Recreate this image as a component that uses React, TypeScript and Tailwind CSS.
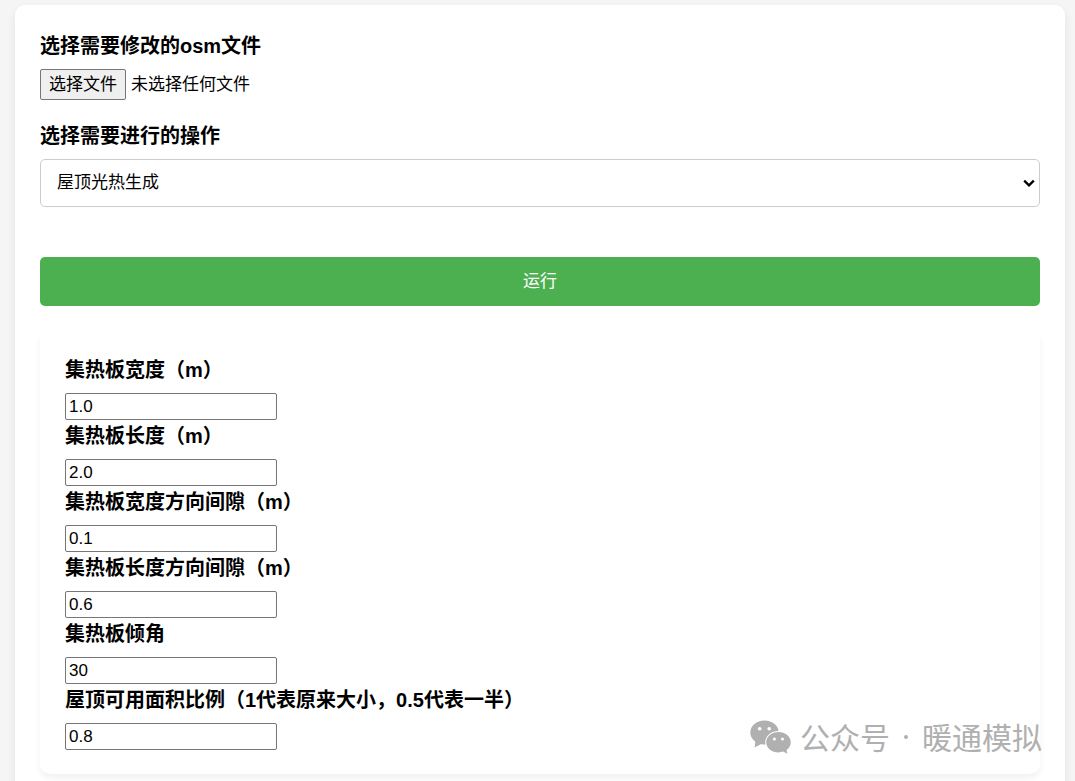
import { useRef, useState } from 'react';

interface ParamField {
  id: string;
  label: string;
  defaultValue: string;
}

const operations = [
  { value: 'roof-solar-thermal', label: '屋顶光热生成' },
];

const paramFields: ParamField[] = [
  { id: 'panel-width', label: '集热板宽度（m）', defaultValue: '1.0' },
  { id: 'panel-length', label: '集热板长度（m）', defaultValue: '2.0' },
  { id: 'width-gap', label: '集热板宽度方向间隙（m）', defaultValue: '0.1' },
  { id: 'length-gap', label: '集热板长度方向间隙（m）', defaultValue: '0.6' },
  { id: 'tilt', label: '集热板倾角', defaultValue: '30' },
  { id: 'roof-ratio', label: '屋顶可用面积比例（1代表原来大小，0.5代表一半）', defaultValue: '0.8' },
];

function WechatIcon() {
  return (
    <svg viewBox="0 0 42 34" className="h-[34px] w-[42px]" aria-hidden="true">
      <g fill="#b0b0b0">
        <ellipse cx="14.5" cy="12.5" rx="14.2" ry="12" />
        <path d="M5.5 20.5 4.6 27.6 12 23.5Z" />
      </g>
      <path
        d="M28.5 12C21.7 12 16.2 16.6 16.2 22.2S21.7 32.4 28.5 32.4C30.1 32.4 31.7 32.1 33.1 31.6L37.4 33.8 36.5 29.9C39.2 28 40.8 25.3 40.8 22.2 40.8 16.6 35.3 12 28.5 12Z"
        fill="#b0b0b0"
        stroke="#ffffff"
        strokeWidth="2"
        strokeLinejoin="round"
        paintOrder="stroke"
      />
      <g fill="#ffffff">
        <circle cx="9.7" cy="8.8" r="1.8" />
        <circle cx="19.2" cy="8.8" r="1.8" />
        <circle cx="24.4" cy="19" r="1.5" />
        <circle cx="32.5" cy="19" r="1.5" />
      </g>
    </svg>
  );
}

function FilePicker() {
  const inputRef = useRef<HTMLInputElement>(null);
  const [fileName, setFileName] = useState('');

  return (
    <div className="mb-[21px]">
      <label htmlFor="osm-file" className="mb-2 block text-xl leading-[30px] font-bold">
        选择需要修改的osm文件
      </label>
      <div className="flex items-center gap-[5px]">
        <input
          ref={inputRef}
          id="osm-file"
          type="file"
          accept=".osm"
          className="hidden"
          onChange={(e) => setFileName(e.target.files?.[0]?.name ?? '')}
        />
        <button
          type="button"
          onClick={() => inputRef.current?.click()}
          className="h-[31px] rounded-[2px] border border-[#767676] bg-[#efefef] px-2 text-[17px] leading-6"
        >
          选择文件
        </button>
        <span className="text-[17px] leading-6">{fileName || '未选择任何文件'}</span>
      </div>
    </div>
  );
}

function OperationSelect() {
  return (
    <div>
      <label htmlFor="operation" className="mb-2 block text-xl leading-[30px] font-bold">
        选择需要进行的操作
      </label>
      <div className="relative">
        <select
          id="operation"
          className="block h-12 w-full appearance-none rounded-[5px] border border-[#cccccc] bg-white px-4 text-[17px]"
        >
          {operations.map((op) => (
            <option key={op.value} value={op.value}>
              {op.label}
            </option>
          ))}
        </select>
        <svg
          viewBox="0 0 12 8"
          className="pointer-events-none absolute top-5 right-[5px] h-2 w-3"
          fill="none"
          stroke="#000000"
          strokeWidth="2.3"
          aria-hidden="true"
        >
          <path d="M1.2 1.6 6 6.4 10.8 1.6" />
        </svg>
      </div>
    </div>
  );
}

function ParamPanel() {
  return (
    <div className="mt-[25px] rounded-[10px] px-[25px] py-6 shadow-[0_4px_6px_rgba(0,0,0,0.06)]">
      <div className="flex flex-col gap-px">
        {paramFields.map((field) => (
          <div key={field.id}>
            <label htmlFor={field.id} className="mb-2 block text-xl leading-[30px] font-bold">
              {field.label}
            </label>
            <input
              id={field.id}
              type="text"
              defaultValue={field.defaultValue}
              className="block h-[27px] w-[212px] rounded-[2px] border border-[#767676] bg-white px-[3px] text-[17px] leading-6"
            />
          </div>
        ))}
      </div>
    </div>
  );
}

export default function App() {
  return (
    <div
      lang="zh-CN"
      className="relative h-screen overflow-hidden bg-[#f5f5f5] pt-[5px] pr-[10px] pl-[15px] font-['Liberation_Sans','Noto_Sans_CJK_SC',sans-serif] text-black"
    >
      <main className="rounded-[10px] bg-white px-[25px] pt-[26px] pb-[25px] shadow-[0_4px_8px_rgba(0,0,0,0.08)]">
        <FilePicker />
        <OperationSelect />

        <button
          type="button"
          className="mt-[50px] block h-[49px] w-full rounded-[5px] bg-[#4caf50] text-[17px] text-white"
        >
          运行
        </button>

        <ParamPanel />
      </main>

      <div className="absolute right-[33px] bottom-[22px] flex items-center gap-2 font-['Noto_Sans_CJK_SC',sans-serif] text-[30px] text-[#b0b0b0]">
        <WechatIcon />
        <div className="flex items-center gap-3.5">
          <span>公众号</span>
          <span className="size-1 rounded-full bg-[#b0b0b0]" />
          <span>暖通模拟</span>
        </div>
      </div>
    </div>
  );
}
